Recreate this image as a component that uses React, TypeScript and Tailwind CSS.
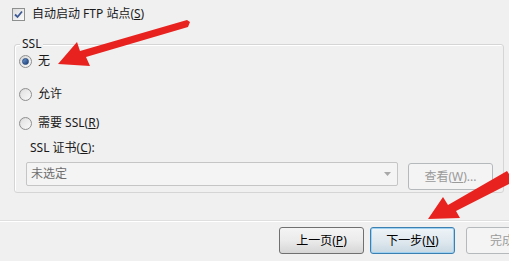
import React from "react";

const font = { fontFamily: '"Noto Sans", "Noto Sans CJK SC", sans-serif' };

function Radio({ checked }: { checked?: boolean }) {
  return (
    <span className="w-[13px] h-[13px] rounded-full border border-[#8f8f8f] bg-gradient-to-br from-[#d6d6d6] to-[#fbfbfb] flex items-center justify-center shrink-0">
      {checked ? (
        <span className="w-[7px] h-[7px] rounded-full bg-gradient-to-br from-[#6f9ad3] to-[#1b3f78] border border-[#284d80]" />
      ) : (
        <span className="w-[9px] h-[9px] rounded-full bg-gradient-to-br from-[#e2e2e2] to-[#f8f8f8]" />
      )}
    </span>
  );
}

function Btn({ children, variant, extra = "justify-center" }: { children: React.ReactNode; variant: "normal" | "focus" | "disabled"; extra?: string }) {
  const cls =
    variant === "normal"
      ? "border-[#707070] bg-gradient-to-b from-[#f4f4f4] via-[#ebebeb] to-[#d6d6d6] text-[#000]"
      : variant === "focus"
      ? "border-[#3c7fb1] bg-gradient-to-b from-[#eef4f8] via-[#e0e9ef] to-[#c9d8e3] text-[#000] shadow-[inset_0_0_0_1px_#9fd2f2]"
      : "border-[#b5b9bc] bg-[#f4f4f4] text-[#9a9a9a]";
  return (
    <div className={`w-[85px] h-[27px] border rounded-[3px] flex items-center text-[12px] shrink-0 ${extra} ${cls}`}>
      {children}
    </div>
  );
}

export default function App() {
  return (
    <div className="relative w-[509px] h-[261px] bg-[#f0f0f0] overflow-hidden text-[12px] text-[#1a1a1a] leading-[14px]" style={font}>
      {/* checkbox row */}
      <div className="flex items-center h-[14px] mt-[7px] ml-[12px] gap-[7px]">
        <span className="w-[13px] h-[13px] border border-[#8e8f8f] bg-gradient-to-br from-[#dcdcdc] to-[#fbfbfb] flex items-center justify-center">
          <svg width="9" height="9" viewBox="0 0 9 9">
            <path d="M1 4.5 L3.5 7 L8 1.5" fill="none" stroke="#3d5a94" strokeWidth="1.8" />
          </svg>
        </span>
        <span>
          自动启动 FTP 站点(<span className="underline">S</span>)
        </span>
      </div>

      {/* group box */}
      <div className="relative ml-[14px] mt-[23px] w-[490px] h-[149px] border border-[#d5d5d5] rounded-[3px] shadow-[inset_1px_1px_0_#ffffff]">
        <span className="absolute -top-[8px] left-[5px] px-[2px] bg-[#f0f0f0] leading-[14px]">SSL</span>
        <div className="flex flex-col pl-[4px] pt-[9px]">
          <div className="flex items-center h-[14px] gap-[6px]">
            <Radio checked />
            <span>无</span>
          </div>
          <div className="flex items-center h-[14px] gap-[6px] mt-[19px]">
            <Radio />
            <span>允许</span>
          </div>
          <div className="flex items-center h-[14px] gap-[6px] mt-[15px]">
            <Radio />
            <span>
              需要 SSL(<span className="underline">R</span>)
            </span>
          </div>
        </div>
        <div className="ml-[15px] mt-[11px] h-[14px] flex items-center">
          SSL 证书(<span className="underline">C</span>):
        </div>
        <div className="flex items-start ml-[11px] mt-[7px] gap-[10px]">
          <div className="w-[372px] h-[24px] border border-[#c5c5c5] rounded-[2px] bg-[#f4f4f4] flex items-center justify-between pl-[4px] pr-[6px] text-[#6d6d6d]">
            <span>未选定</span>
            <svg width="7" height="4" viewBox="0 0 7 4">
              <path d="M0 0 L7 0 L3.5 4 Z" fill="#a8a8a8" />
            </svg>
          </div>
          <div className="mt-[1px]">
            <Btn variant="disabled">
              查看(<span className="underline">W</span>)...
            </Btn>
          </div>
        </div>
      </div>

      {/* separator */}
      <div className="mt-[27px] h-[2px] border-t border-[#dfdfdf] border-b border-b-[#ffffff]" />

      {/* bottom buttons */}
      <div className="flex mt-[5px] ml-[279px] gap-[6px]">
        <Btn variant="normal">
          上一页(<span className="underline">P</span>)
        </Btn>
        <Btn variant="focus">
          下一步(<span className="underline">N</span>)
        </Btn>
        <div className="ml-[5px]">
          <Btn variant="disabled" extra="justify-start pl-[23px]">完成</Btn>
        </div>
      </div>

      {/* red arrows overlay */}
      <svg className="absolute inset-0 pointer-events-none" width="509" height="261" viewBox="0 0 509 261">
        <path d="M190 22 L188 27 L86 57 L90 66 L58 64 L77 42 L80 51 L187 20 Z" fill="#e8231f" />
        <path d="M511 177 L509 184 L456 211 L460 218 L428 219 L443 197 L448 205 L507 171 Z" fill="#e8231f" />
      </svg>
    </div>
  );
}
